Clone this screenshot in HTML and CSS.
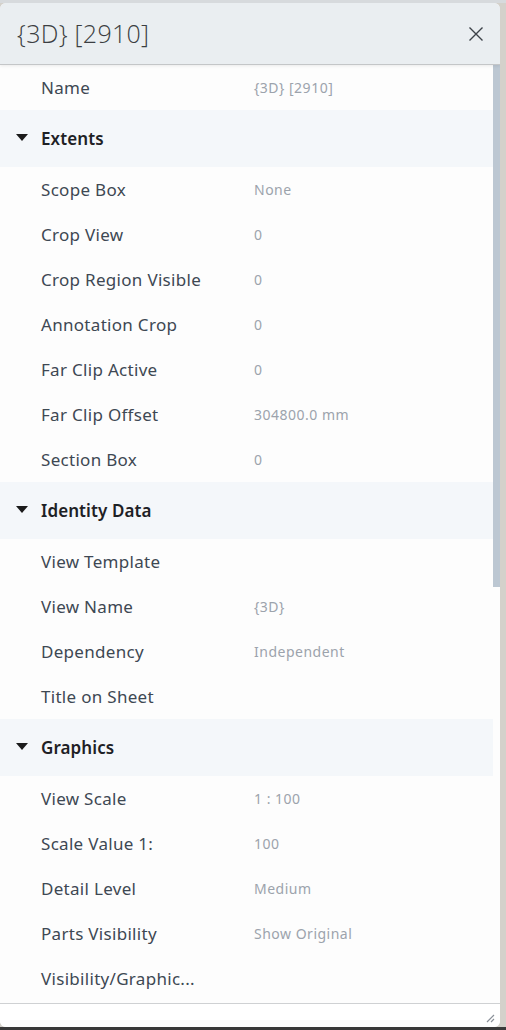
FILE: index.html
```html
<!DOCTYPE html>
<html lang="en">
<head>
<meta charset="utf-8">
<title>{3D} [2910]</title>
<link rel="stylesheet" href="styles.css">
</head>
<body>
<div class="panel">
  <header class="panel-header">
    <h1 class="panel-title">{3D} [2910]</h1>
    <button class="close-btn" aria-label="Close">
      <svg width="16" height="16" viewBox="0 0 16 16"><path d="M1.5 1.5 L14.5 14.5 M14.5 1.5 L1.5 14.5" stroke="#3d4249" stroke-width="1.4" fill="none"/></svg>
    </button>
  </header>
  <div class="panel-body">
    <div class="prop-list">
      <div class="row"><span class="label">Name</span><span class="value">{3D} [2910]</span></div>

      <div class="section"><span class="caret"></span><span class="section-name">Extents</span></div>
      <div class="row"><span class="label">Scope Box</span><span class="value">None</span></div>
      <div class="row"><span class="label">Crop View</span><span class="value">0</span></div>
      <div class="row"><span class="label">Crop Region Visible</span><span class="value">0</span></div>
      <div class="row"><span class="label">Annotation Crop</span><span class="value">0</span></div>
      <div class="row"><span class="label">Far Clip Active</span><span class="value">0</span></div>
      <div class="row"><span class="label">Far Clip Offset</span><span class="value">304800.0 mm</span></div>
      <div class="row"><span class="label">Section Box</span><span class="value">0</span></div>

      <div class="section"><span class="caret"></span><span class="section-name">Identity Data</span></div>
      <div class="row"><span class="label">View Template</span><span class="value"></span></div>
      <div class="row"><span class="label">View Name</span><span class="value">{3D}</span></div>
      <div class="row"><span class="label">Dependency</span><span class="value">Independent</span></div>
      <div class="row"><span class="label">Title on Sheet</span><span class="value"></span></div>

      <div class="section"><span class="caret"></span><span class="section-name">Graphics</span></div>
      <div class="row"><span class="label">View Scale</span><span class="value">1 : 100</span></div>
      <div class="row"><span class="label">Scale Value 1:</span><span class="value">100</span></div>
      <div class="row"><span class="label">Detail Level</span><span class="value">Medium</span></div>
      <div class="row"><span class="label">Parts Visibility</span><span class="value">Show Original</span></div>
      <div class="row"><span class="label">Visibility/Graphic...</span><span class="value"></span></div>
    </div>
    <div class="scroll-track"><div class="scroll-thumb"></div></div>
  </div>
  <footer class="panel-footer">
    <svg class="grip" width="10" height="10" viewBox="0 0 10 10"><path d="M9 2 L2 9 M9 6 L6 9" stroke="#8a9099" stroke-width="1.2" fill="none"/></svg>
  </footer>
</div>
</body>
</html>
```
FILE: styles.css
```css
html {
  background: #d3d0ca;
}
body {
  margin: 0;
  padding: 3px 6px 3px 0;
  background: linear-gradient(to bottom, #d7dadd 0, #d7dadd 3px, #d4d1cb 3px, #d4d1cb 1027px, #3a3a3a 1027px);
  font-family: "Noto Sans", "Open Sans", sans-serif;
  height: 1024px;
}
.panel {
  width: 500px;
  height: 1024px;
  background: #fdfdfd;
  border-radius: 6px;
  overflow: hidden;
  display: flex;
  flex-direction: column;
}
.panel-header {
  box-sizing: border-box;
  height: 62px;
  flex: 0 0 62px;
  background: #eaeef1;
  border-bottom: 1px solid #c4c6c8;
  display: flex;
  align-items: center;
  justify-content: space-between;
  padding: 0 16px 0 17px;
  box-shadow: 0 1px 3px rgba(0,0,0,0.08);
  position: relative;
  z-index: 1;
}
.panel-title {
  margin: 0;
  font-family: "Open Sans", "Noto Sans", sans-serif;
  font-weight: 300;
  font-size: 25px;
  color: #3b3e42;
  letter-spacing: 0.3px;
  padding-bottom: 2px;
}
.close-btn {
  border: 0;
  background: transparent;
  padding: 0;
  width: 16px;
  height: 16px;
  display: flex;
  margin-top: 1px;
}
.panel-body {
  flex: 1;
  min-height: 0;
  display: flex;
  overflow: hidden;
}
.prop-list {
  flex: 1;
  display: flex;
  flex-direction: column;
}
.row {
  height: 45px;
  flex: 0 0 45px;
  display: flex;
  align-items: center;
}
.label {
  width: 213px;
  padding-left: 41px;
  font-size: 17px;
  letter-spacing: 0.3px;
  color: #3e4853;
}
.value {
  font-size: 14px;
  letter-spacing: 0.5px;
  color: #9ca3ac;
}
.section {
  height: 57px;
  flex: 0 0 57px;
  background: #f4f7fa;
  display: flex;
  align-items: center;
}
.caret {
  width: 0;
  height: 0;
  border-left: 6px solid transparent;
  border-right: 6px solid transparent;
  border-top: 7px solid #1b1b1b;
  margin-left: 16px;
  margin-right: 13px;
  margin-top: -2px;
}
.section-name {
  font-size: 17px;
  font-weight: 600;
  letter-spacing: 0.1px;
  color: #1e2125;
}
.scroll-track {
  width: 7px;
  flex: 0 0 7px;
}
.scroll-thumb {
  height: 522px;
  background: #bcc7d2;
}
.panel-footer {
  box-sizing: border-box;
  height: 24px;
  flex: 0 0 24px;
  border-top: 1px solid #cfd1d3;
  background: #ffffff;
  display: flex;
  justify-content: flex-end;
  align-items: flex-end;
  padding: 0 5px 4px 0;
}
.grip {
  display: block;
}
```
